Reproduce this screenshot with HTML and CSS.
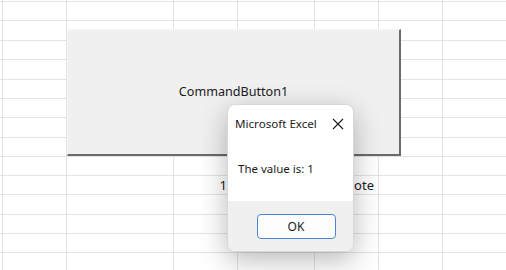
FILE: index.html
```html
<!DOCTYPE html>
<html lang="en">
<head>
    <meta charset="UTF-8">
    <meta name="viewport" content="width=device-width, initial-scale=1.0">
    <title>Microsoft Excel</title>
    <link rel="stylesheet" href="styles.css">
</head>
<body>
    <div class="sheet" id="sheet"></div>

    <button class="command-btn">CommandButton1</button>

    <div class="msgbox">
        <div class="msgbox-title">
            <span>Microsoft Excel</span>
            <svg class="close-icon" width="12" height="12" viewBox="0 0 12 12">
                <path d="M1 1L11 11M11 1L1 11" stroke="#1b1b1b" stroke-width="1.1" fill="none"/>
            </svg>
        </div>
        <div class="msgbox-body">The value is: 1</div>
        <div class="msgbox-footer">
            <button class="ok-btn">OK</button>
        </div>
    </div>

    <script>
        const ROWS = 15;
        const COLS = 8;
        const values = {
            '10,3': { text: '1', cls: 'num' },
            '10,5': { text: 'Note', cls: 'txt' }
        };

        const sheet = document.getElementById('sheet');
        for (let r = 0; r < ROWS; r++) {
            for (let c = 0; c < COLS; c++) {
                const cell = document.createElement('div');
                cell.className = 'cell';
                const v = values[r + ',' + c];
                if (v) {
                    cell.textContent = v.text;
                    cell.classList.add(v.cls);
                }
                sheet.appendChild(cell);
            }
        }
    </script>
</body>
</html>
```

FILE: styles.css
```css
body {
    margin: 0;
    padding: 0;
    background: #fff;
    font-family: 'Noto Sans', 'Open Sans', sans-serif;
    color: #1b1b1b;
    overflow: hidden;
}

.sheet {
    display: grid;
    grid-template-columns: 3px 64px 107px 64px 77px 64px 64px 64px;
    grid-template-rows: 2px 19px 20px 19px 20px 19px 19px 20px 19px 19px 19px 20px 19px 19px 19px;
    width: 506px;
    height: 270px;
}

.cell {
    box-sizing: border-box;
    border-right: 1px solid #e3e3e3;
    border-bottom: 1px solid #e3e3e3;
    font-size: 13px;
    line-height: 18px;
    white-space: nowrap;
    overflow: visible;
}

.cell.num {
    text-align: right;
    padding-right: 10px;
}

.cell.txt {
    text-align: right;
    padding-right: 4px;
}

.command-btn {
    position: absolute;
    left: 67px;
    top: 29px;
    width: 334px;
    height: 127px;
    box-sizing: border-box;
    margin: 0;
    padding: 0 0 2px 0;
    background: #f0f0f0;
    border-top: 1px solid #f6f6f6;
    border-left: 1px solid #f6f6f6;
    border-right: 2px solid #6b6b6b;
    border-bottom: 2px solid #6b6b6b;
    font-family: 'Noto Sans', sans-serif;
    font-size: 12.6px;
    color: #1b1b1b;
}

.msgbox {
    position: absolute;
    left: 227px;
    top: 104px;
    width: 127px;
    height: 148px;
    box-sizing: border-box;
    background: #fff;
    border: 1px solid #d8d8d8;
    border-radius: 8px;
    box-shadow: 0 8px 28px rgba(0, 0, 0, 0.28);
    display: flex;
    flex-direction: column;
    overflow: hidden;
}

.msgbox-title {
    display: flex;
    justify-content: space-between;
    align-items: center;
    padding: 6px 9px 0 7px;
    height: 24px;
    font-size: 11.6px;
}

.close-icon {
    margin-top: 1px;
}

.msgbox-body {
    flex: 1;
    padding: 26px 0 0 10px;
    font-size: 11.5px;
}

.msgbox-footer {
    height: 50px;
    background: #f0f0f0;
    display: flex;
    justify-content: center;
    align-items: center;
}

.ok-btn {
    width: 79px;
    height: 25px;
    margin: 1px 0 0 11px;
    box-sizing: border-box;
    background: #fdfdfd;
    border: 1px solid #4a88d6;
    border-radius: 4px;
    font-family: 'Noto Sans', sans-serif;
    font-size: 12px;
    color: #1b1b1b;
}
```
